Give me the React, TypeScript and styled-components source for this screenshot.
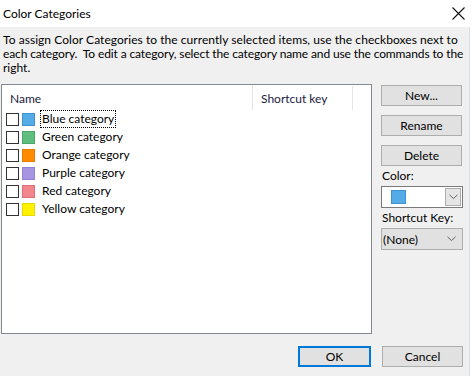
import React from "react";
import styled, { createGlobalStyle } from "styled-components";

const GlobalStyle = createGlobalStyle`
  html, body {
    margin: 0;
    padding: 0;
    background: #ffffff;
  }
  * {
    box-sizing: border-box;
  }
`;

interface Category {
  name: string;
  color: string;
  edge: string;
}

const categories: Category[] = [
  { name: "Blue category", color: "#55abe5", edge: "#3f93d3" },
  { name: "Green category", color: "#5fbe7d", edge: "#4aa866" },
  { name: "Orange category", color: "#ff8c00", edge: "#e87c00" },
  { name: "Purple category", color: "#a895e2", edge: "#9582d2" },
  { name: "Red category", color: "#f1868d", edge: "#de6f77" },
  { name: "Yellow category", color: "#fff100", edge: "#e8d800" },
];

const Chevron = () => (
  <svg width="9" height="6" viewBox="0 0 9 6">
    <path d="M0.5 0.8 L4.5 4.6 L8.5 0.8" fill="none" stroke="#606060" strokeWidth="1" />
  </svg>
);

const App: React.FunctionComponent = () => {
  return (
    <Window>
      <GlobalStyle />
      <TitleBar>
        <Title>Color Categories</Title>
        <svg width="13" height="13" viewBox="0 0 13 13">
          <path d="M0.5 0.5 L12.5 12.5 M12.5 0.5 L0.5 12.5" stroke="#111" strokeWidth="1.1" />
        </svg>
      </TitleBar>
      <Body>
        <Description>
          <Line spacing={0.05}>To assign Color Categories to the currently selected items, use the checkboxes next to</Line>
          <Line spacing={-0.12}>each category.&nbsp; To edit a category, select the category name and use the commands to the</Line>
          <Line>right.</Line>
        </Description>
        <Main>
          <ListBox>
            <ListHeader>
              <HeaderCell width={251}>Name</HeaderCell>
              <HeaderCell width={100}>Shortcut key</HeaderCell>
            </ListHeader>
            {categories.map((c, i) => (
              <Row key={c.name}>
                <Check />
                <Swatch color={c.color} edge={c.edge} />
                <Label focused={i === 0}>{c.name}</Label>
              </Row>
            ))}
          </ListBox>
          <Side>
            <Button>New...</Button>
            <Button>Rename</Button>
            <Button>Delete</Button>
            <FieldLabel>Color:</FieldLabel>
            <ColorCombo>
              <ComboSwatch />
              <DropButton>
                <Chevron />
              </DropButton>
            </ColorCombo>
            <FieldLabel>Shortcut Key:</FieldLabel>
            <SelectCombo>
              <span>(None)</span>
              <Chevron />
            </SelectCombo>
          </Side>
        </Main>
        <Footer>
          <Button primary>OK</Button>
          <Button>Cancel</Button>
        </Footer>
      </Body>
    </Window>
  );
};

export default App;

const Window = styled.div`
  width: 472px;
  height: 376px;
  background: #ffffff;
  display: flex;
  flex-direction: column;
  font-family: "Segoe UI", Lato, "Open Sans", sans-serif;
  font-size: 12px;
  color: #000;
  overflow: hidden;
`;

const TitleBar = styled.div`
  height: 27px;
  flex: none;
  display: flex;
  align-items: center;
  justify-content: space-between;
  padding: 0 7px 1px 3px;
  background: #ffffff;
`;

const Title = styled.div`
  font-size: 12px;
  color: #000;
`;

const Body = styled.div`
  flex: 1;
  width: 470px;
  background: #f0f0f0;
  border-right: 1px solid #d6dee8;
  border-bottom: 1px solid #2b7cd3;
  display: flex;
  flex-direction: column;
  padding: 6px 0 0 1px;
`;

const Description = styled.div`
  padding-left: 2px;
  height: 42px;
  display: flex;
  flex-direction: column;
`;

const Line = styled.div<{ spacing?: number }>`
  height: 14px;
  line-height: 14px;
  white-space: nowrap;
  letter-spacing: ${(p) => p.spacing ?? 0}px;
`;

const Main = styled.div`
  display: flex;
  margin-top: 9px;
  align-items: flex-start;
`;

const ListBox = styled.div`
  width: 371px;
  height: 250px;
  background: #ffffff;
  border: 1px solid #828790;
  padding: 1px 0 0 0;
`;

const ListHeader = styled.div`
  display: flex;
  height: 24px;
`;

const HeaderCell = styled.div<{ width: number }>`
  width: ${(p) => p.width}px;
  flex: none;
  border-right: 1px solid #e5e5e5;
  padding: 5px 0 0 8px;
  color: #1a1a40;
`;

const Row = styled.div`
  display: flex;
  align-items: center;
  height: 18px;
  padding-left: 4px;
`;

const Check = styled.div`
  width: 13px;
  height: 13px;
  border: 1px solid #333333;
  background: #ffffff;
  flex: none;
`;

const Swatch = styled.div<{ color: string; edge: string }>`
  width: 13px;
  height: 13px;
  margin-left: 3px;
  background: ${(p) => p.color};
  border: 1px solid ${(p) => p.edge};
  flex: none;
`;

const Label = styled.div<{ focused?: boolean }>`
  margin-left: 6px;
  padding: 0 1px;
  line-height: 16px;
  outline: ${(p) => (p.focused ? "1px dotted #000" : "none")};
  outline-offset: 0;
`;

const Side = styled.div`
  width: 82px;
  margin-left: 9px;
  margin-top: 1px;
  display: flex;
  flex-direction: column;
`;

const Button = styled.button<{ primary?: boolean }>`
  font: inherit;
  color: #000;
  height: 21px;
  width: ${(p) => (p.primary ? "73px" : "81px")};
  background: #e1e1e1;
  border: ${(p) => (p.primary ? "2px solid #0078d7" : "1px solid #adadad")};
  padding: 0;
  margin-bottom: 9px;
  flex: none;
`;

const FieldLabel = styled.div`
  line-height: 14px;
  margin: -6px 0 3px 1px;
`;

const ColorCombo = styled.div`
  width: 82px;
  height: 22px;
  background: #ffffff;
  border: 1px solid #7a7a7a;
  display: flex;
  align-items: center;
  justify-content: space-between;
  padding: 0 1px 0 9px;
  margin-bottom: 9px;
`;

const ComboSwatch = styled.div`
  width: 15px;
  height: 14px;
  background: #55abe5;
  border: 1px solid #3f93d3;
`;

const DropButton = styled.div`
  width: 16px;
  height: 18px;
  background: #e5e5e5;
  border: 1px solid #adadad;
  display: flex;
  align-items: center;
  justify-content: center;
`;

const SelectCombo = styled.div`
  width: 82px;
  height: 22px;
  background: #e1e1e1;
  border: 1px solid #adadad;
  display: flex;
  align-items: center;
  justify-content: space-between;
  padding: 0 6px 0 1px;
`;

const Footer = styled.div`
  display: flex;
  justify-content: flex-end;
  gap: 11px;
  margin-top: 12px;
  padding-right: 6px;
`;
